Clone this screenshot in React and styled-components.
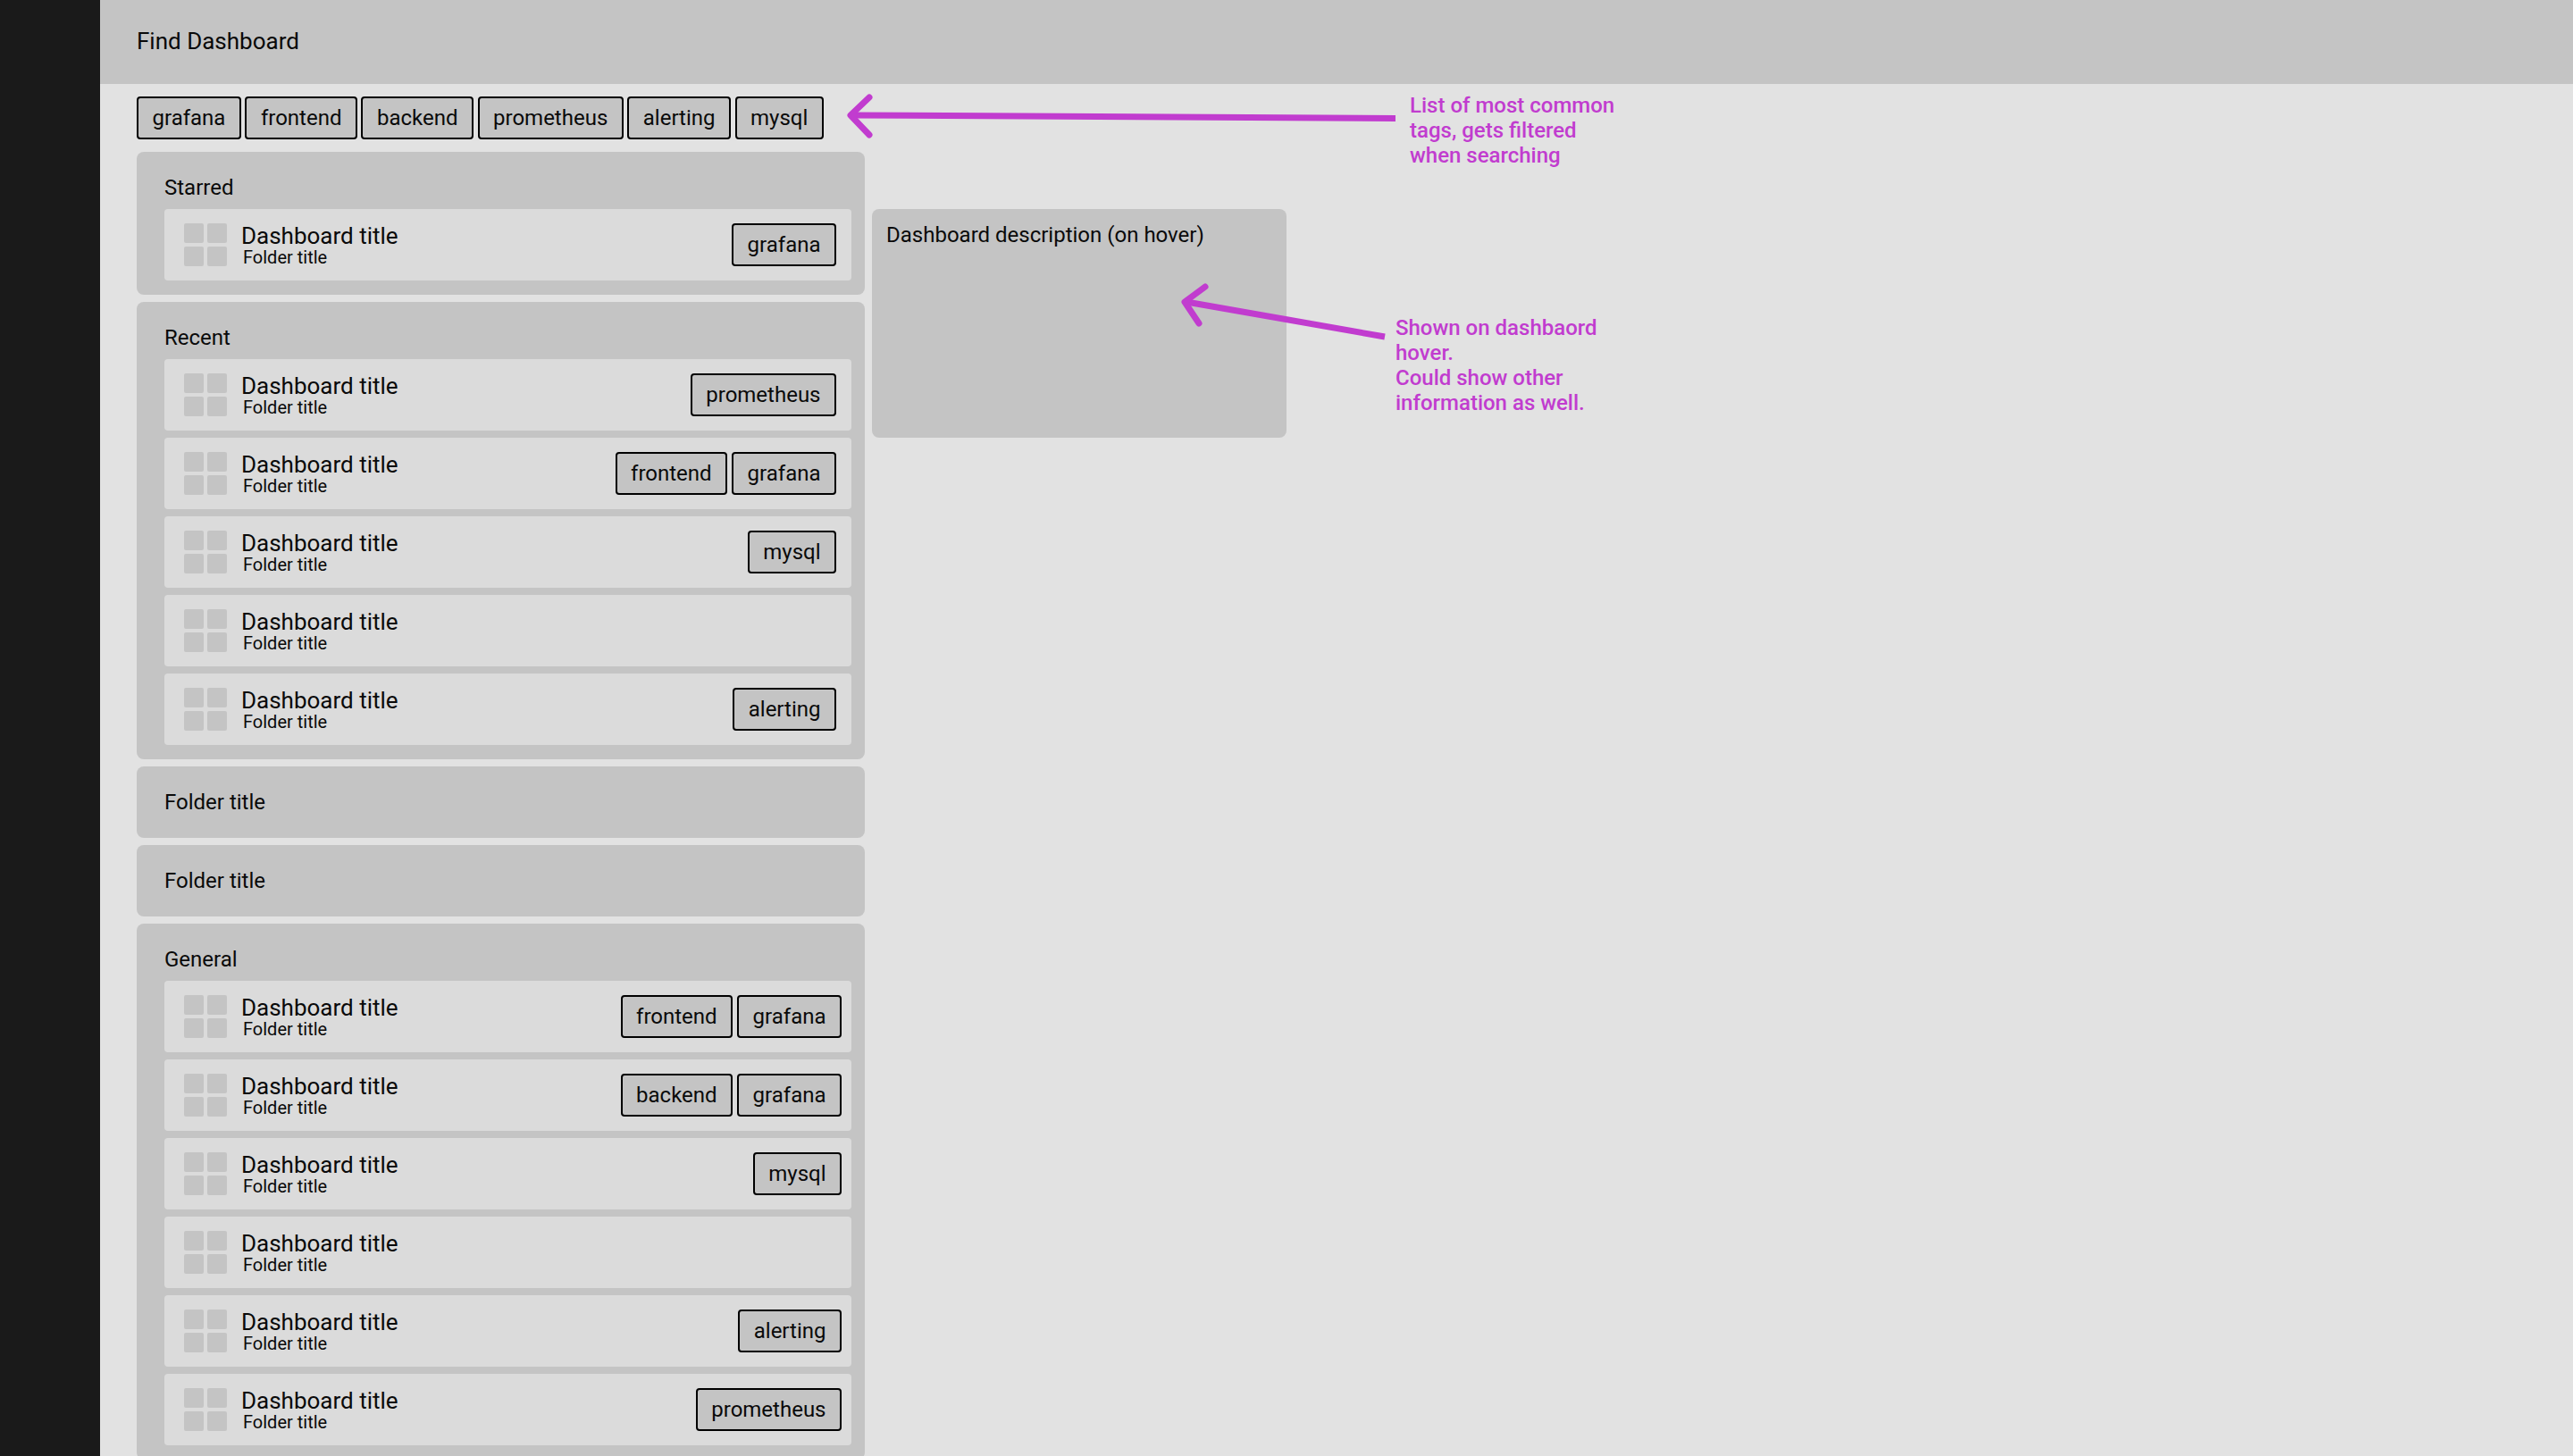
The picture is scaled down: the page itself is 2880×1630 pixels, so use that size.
import styled, { createGlobalStyle } from "styled-components";

const GlobalStyle = createGlobalStyle`
  html, body {
    margin: 0;
    height: 100%;
    overflow: hidden;
  }
  body {
    font-family: Roboto, "Liberation Sans", sans-serif;
    color: #0a0a0a;
    background: #e2e2e2;
  }
`;

const Page = styled.div`
  position: relative;
  display: flex;
  width: 2880px;
  height: 1630px;
  overflow: hidden;
`;

const SideNav = styled.div`
  flex: 0 0 112px;
  background: #1a1a1a;
`;

const Content = styled.div`
  flex: 1;
  min-width: 0;
`;

const TopBar = styled.div`
  box-sizing: border-box;
  display: flex;
  align-items: center;
  height: 94px;
  padding: 0 0 3px 41px;
  background: #c4c4c4;
  font-size: 26px;
  line-height: 30px;
`;

const Main = styled.div`
  padding: 14px 0 0 41px;
`;

const TagList = styled.div`
  display: flex;
  gap: 4.5px;
`;

const Tag = styled.div`
  box-sizing: border-box;
  display: flex;
  align-items: center;
  height: 48px;
  padding: 0 15.5px;
  background: #c4c4c4;
  border: 2px solid #000;
  border-radius: 4px;
  font-size: 24px;
  white-space: nowrap;
`;

const Columns = styled.div`
  display: flex;
  align-items: flex-start;
  gap: 8px;
  margin-top: 14px;
`;

const List = styled.div`
  display: flex;
  flex-direction: column;
  gap: 8px;
  flex: 0 0 815px;
`;

const Group = styled.div`
  box-sizing: border-box;
  min-height: 80px;
  padding: 26px 15px 16px 31px;
  background: #c4c4c4;
  border-radius: 8px;
`;

const GroupTitle = styled.div`
  font-size: 24px;
  line-height: 28px;
`;

const Rows = styled.div`
  display: flex;
  flex-direction: column;
  gap: 8px;
  margin-top: 10px;
`;

const Row = styled.div`
  box-sizing: border-box;
  display: flex;
  align-items: center;
  height: 80px;
  padding: 0 ${(p) => (p.$wide ? "11px" : "17px")} 0 22px;
  background: #dbdbdb;
  border-radius: 4px;
`;

const Thumb = styled.div`
  display: grid;
  grid-template-columns: 22px 22px;
  grid-template-rows: 22px 22px;
  gap: 4px;
  margin-right: 16px;

  span {
    background: #c4c4c4;
    border-radius: 2px;
  }
`;

const RowText = styled.div`
  flex: 1;
`;

const RowTitle = styled.div`
  font-size: 26px;
  line-height: 28px;
`;

const RowFolder = styled.div`
  margin: -2px 0 -1px 2px;
  font-size: 20px;
  line-height: 24px;
`;

const RowTags = styled.div`
  display: flex;
  gap: 5px;
`;

const Description = styled.div`
  box-sizing: border-box;
  width: 464px;
  height: 256px;
  margin-top: 64px;
  padding: 15px 16px;
  background: #c4c4c4;
  border-radius: 8px;
  font-size: 24px;
  line-height: 28px;
`;

const Note = styled.div`
  position: absolute;
  top: ${(p) => p.$top}px;
  left: ${(p) => p.$left}px;
  color: #c13ccf;
  font-size: 24px;
  font-weight: 500;
  line-height: 28px;
  white-space: nowrap;
`;

const Overlay = styled.svg`
  position: absolute;
  top: 0;
  left: 0;
  pointer-events: none;
`;

const tags = ["grafana", "frontend", "backend", "prometheus", "alerting", "mysql"];

const recent = [["prometheus"], ["frontend", "grafana"], ["mysql"], [], ["alerting"]];

const general = [
  ["frontend", "grafana"],
  ["backend", "grafana"],
  ["mysql"],
  [],
  ["alerting"],
  ["prometheus"],
];

function DashboardRow({ tags, wide }) {
  return (
    <Row $wide={wide}>
      <Thumb>
        <span />
        <span />
        <span />
        <span />
      </Thumb>
      <RowText>
        <RowTitle>Dashboard title</RowTitle>
        <RowFolder>Folder title</RowFolder>
      </RowText>
      <RowTags>
        {tags.map((t) => (
          <Tag key={t}>{t}</Tag>
        ))}
      </RowTags>
    </Row>
  );
}

function Arrows() {
  return (
    <Overlay width="2880" height="1630" fill="none" stroke="#c13ccf" strokeWidth="7">
      <path d="M1562 132.5L953 129" />
      <path d="M973 109L952 129L973 151" strokeLinecap="round" strokeLinejoin="round" />
      <path d="M1550 377L1328 338" />
      <path d="M1349 321L1326 338L1342 362" strokeLinecap="round" strokeLinejoin="round" />
    </Overlay>
  );
}

export default function App() {
  return (
    <>
      <GlobalStyle />
      <Page>
        <SideNav />
        <Content>
          <TopBar>Find Dashboard</TopBar>
          <Main>
            <TagList>
              {tags.map((t) => (
                <Tag key={t}>{t}</Tag>
              ))}
            </TagList>
            <Columns>
              <List>
                <Group>
                  <GroupTitle>Starred</GroupTitle>
                  <Rows>
                    <DashboardRow tags={["grafana"]} />
                  </Rows>
                </Group>
                <Group>
                  <GroupTitle>Recent</GroupTitle>
                  <Rows>
                    {recent.map((r, i) => (
                      <DashboardRow key={i} tags={r} />
                    ))}
                  </Rows>
                </Group>
                <Group>
                  <GroupTitle>Folder title</GroupTitle>
                </Group>
                <Group>
                  <GroupTitle>Folder title</GroupTitle>
                </Group>
                <Group>
                  <GroupTitle>General</GroupTitle>
                  <Rows>
                    {general.map((r, i) => (
                      <DashboardRow key={i} tags={r} wide />
                    ))}
                  </Rows>
                </Group>
              </List>
              <Description>Dashboard description (on hover)</Description>
            </Columns>
          </Main>
        </Content>
        <Arrows />
        <Note $top={104} $left={1578}>
          List of most common
          <br />
          tags, gets filtered
          <br />
          when searching
        </Note>
        <Note $top={353} $left={1562}>
          Shown on dashbaord
          <br />
          hover.
          <br />
          Could show other
          <br />
          information as well.
        </Note>
      </Page>
    </>
  );
}
